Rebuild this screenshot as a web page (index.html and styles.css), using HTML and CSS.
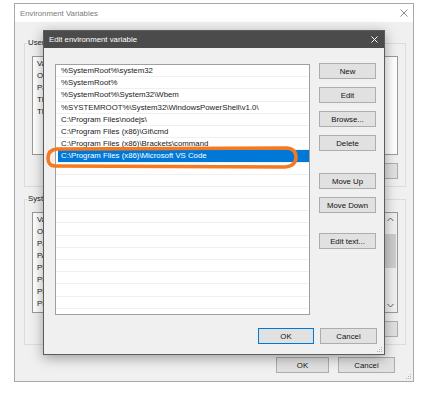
FILE: index.html
```html
<!DOCTYPE html>
<html>
  <head>
    <meta charset="utf-8" />
    <title>Edit environment variable</title>
    <link rel="stylesheet" href="styles.css">
  </head>
  <body>
    <div class="desk">
      <!-- back window -->
      <div class="win env">
        <div class="titlebar">
          <span>Environment Variables</span>
          <svg class="x" width="8" height="8" viewBox="0 0 8 8"><path d="M0.5 0.5 L7.5 7.5 M7.5 0.5 L0.5 7.5" stroke="#8a8a8a" stroke-width="1" /></svg>
        </div>
        <div class="env-body">
          <fieldset class="group">
            <legend>User variables for user</legend>
            <div class="vlist user-list">
              <div class="vrow head">Variable</div>
              <div class="vrow">OneDrive</div>
              <div class="vrow">Path</div>
              <div class="vrow">TEMP</div>
              <div class="vrow">TMP</div>
            </div>
            <div class="btnrow">
              <button class="btn wide">New...</button>
              <button class="btn wide">Edit...</button>
              <button class="btn wide">Delete</button>
            </div>
          </fieldset>
          <fieldset class="group sys">
            <legend>System variables</legend>
            <div class="vlist sys-list">
              <div class="rows">
                <div class="vrow head">Variable</div>
                <div class="vrow">OS</div>
                <div class="vrow">Path</div>
                <div class="vrow">PATHEXT</div>
                <div class="vrow">PROCESSOR_ARCHITECTURE</div>
                <div class="vrow">PROCESSOR_IDENTIFIER</div>
                <div class="vrow">PROCESSOR_LEVEL</div>
                <div class="vrow">PROCESSOR_REVISION</div>
              </div>
              <div class="scroll">
                <div class="arrow"><svg width="7" height="5" viewBox="0 0 7 5"><path d="M0.5 4 L3.5 1 L6.5 4" fill="none" stroke="#606060" /></svg></div>
                <div class="track"><div class="thumb"></div></div>
                <div class="arrow"><svg width="7" height="5" viewBox="0 0 7 5"><path d="M0.5 1 L3.5 4 L6.5 1" fill="none" stroke="#606060" /></svg></div>
              </div>
            </div>
            <div class="btnrow">
              <button class="btn wide">New...</button>
              <button class="btn wide">Edit...</button>
              <button class="btn wide">Delete</button>
            </div>
          </fieldset>
          <div class="env-foot">
            <button class="btn ok-b">OK</button>
            <button class="btn cancel-b">Cancel</button>
          </div>
        </div>
        <svg class="grip" width="7" height="7" viewBox="0 0 7 7"><g fill="#b5b5b5"><rect x="5" y="1" width="1" height="1"/><rect x="3" y="3" width="1" height="1"/><rect x="5" y="3" width="1" height="1"/><rect x="1" y="5" width="1" height="1"/><rect x="3" y="5" width="1" height="1"/><rect x="5" y="5" width="1" height="1"/></g></svg>
      </div>

      <!-- front window -->
      <div class="win edit">
        <div class="titlebar dark">
          <span>Edit environment variable</span>
          <svg class="x" width="7" height="7" viewBox="0 0 7 7"><path d="M0.5 0.5 L6.5 6.5 M6.5 0.5 L0.5 6.5" stroke="#ffffff" stroke-width="1" /></svg>
        </div>
        <div class="edit-body">
          <div class="edit-main">
            <div class="plist">
              <div class="prow">%SystemRoot%\system32</div>
              <div class="prow">%SystemRoot%</div>
              <div class="prow">%SystemRoot%\System32\Wbem</div>
              <div class="prow">%SYSTEMROOT%\System32\WindowsPowerShell\v1.0\</div>
              <div class="prow">C:\Program Files\nodejs\</div>
              <div class="prow">C:\Program Files (x86)\Git\cmd</div>
              <div class="prow">C:\Program Files (x86)\Brackets\command</div>
              <div class="prow sel">C:\Program Files (x86)\Microsoft VS Code</div>
              <div class="prow"></div>
              <div class="prow"></div>
              <div class="prow"></div>
              <div class="prow"></div>
              <div class="prow"></div>
              <div class="prow"></div>
              <div class="prow"></div>
              <div class="prow"></div>
              <div class="prow"></div>
              <div class="prow"></div>
              <div class="prow"></div>
              <div class="prow"></div>
              <div class="prow"></div>
            </div>
            <div class="side">
              <button class="btn">New</button>
              <button class="btn">Edit</button>
              <button class="btn">Browse...</button>
              <button class="btn">Delete</button>
              <button class="btn up">Move Up</button>
              <button class="btn">Move Down</button>
              <button class="btn etext">Edit text...</button>
            </div>
          </div>
          <div class="edit-foot">
            <button class="btn ok-f">OK</button>
            <button class="btn cancel-f">Cancel</button>
          </div>
        </div>
        <svg class="grip" width="7" height="7" viewBox="0 0 7 7"><g fill="#b5b5b5"><rect x="5" y="1" width="1" height="1"/><rect x="3" y="3" width="1" height="1"/><rect x="5" y="3" width="1" height="1"/><rect x="1" y="5" width="1" height="1"/><rect x="3" y="5" width="1" height="1"/><rect x="5" y="5" width="1" height="1"/></g></svg>
      </div>

      <!-- orange hand mark round the selected row -->
      <svg class="mark" width="256" height="26" viewBox="0 0 256 26">
        <path d="M12 3 L242 2 Q251 3 251 11 Q251 20 240 21 L10 20 Q3 20 3 12 Q3 4 12 3 Z" fill="none" stroke="#f47920" stroke-width="3.5" />
      </svg>
    </div>
  </body>
</html>
```

FILE: styles.css
```css
  * {
    box-sizing: border-box;
  }
  body {
    margin: 0;
    background: #ffffff;
    font-family: "Liberation Sans", Arial, sans-serif;
    font-size: 7.8px;
    color: #1a1a1a;
  }
  .desk {
    position: relative;
    width: 425px;
    height: 393px;
    overflow: hidden;
  }
  .win {
    position: absolute;
    display: flex;
    flex-direction: column;
    background: #f0f0f0;
  }
  .titlebar {
    display: flex;
    align-items: center;
    justify-content: space-between;
    flex-shrink: 0;
  }
  .grip {
    position: absolute;
    right: 1px;
    bottom: 1px;
  }
  .btn {
    height: 16px;
    padding: 0;
    margin: 0;
    background: #e1e1e1;
    border: 1px solid #adadad;
    font: inherit;
    color: #111;
  }

  /* back window */
  .env {
    left: 14px;
    top: 3px;
    width: 400px;
    height: 379px;
    border: 1px solid #a8a8a8;
  }
  .env .titlebar {
    height: 18px;
    background: #ffffff;
    color: #7a7a7a;
    padding: 0 5px 0 5px;
  }
  .env-body {
    flex: 1;
    display: flex;
    flex-direction: column;
    padding: 16px 7px 0 9px;
  }
  .group {
    margin: 0;
    min-width: 0;
    border: 1px solid #dcdcdc;
    padding: 8px 7px 7px 7px;
  }
  .group legend {
    padding: 0 1px;
    margin-left: -5px;
    line-height: 10px;
    color: #222;
  }
  .group.sys {
    margin-top: 7px;
  }
  .vlist {
    background: #ffffff;
    border: 1px solid #9a9a9a;
    overflow: hidden;
  }
  .user-list {
    height: 99px;
  }
  .sys-list {
    height: 101px;
    display: flex;
  }
  .sys-list .rows {
    flex: 1;
  }
  .vrow {
    height: 12px;
    line-height: 12px;
    padding-left: 4px;
    white-space: nowrap;
  }
  .vrow.head {
    height: 13px;
    line-height: 13px;
  }
  .scroll {
    width: 13px;
    display: flex;
    flex-direction: column;
    background: #f0f0f0;
  }
  .arrow {
    height: 13px;
    display: flex;
    align-items: center;
    justify-content: center;
  }
  .track {
    flex: 1;
  }
  .thumb {
    margin: 8px 1px 0 1px;
    height: 34px;
    background: #cdcdcd;
  }
  .btnrow {
    display: flex;
    justify-content: flex-end;
    gap: 6px;
    margin-top: 8px;
  }
  .btn.wide {
    width: 60px;
  }
  .env-foot {
    display: flex;
    justify-content: flex-end;
    gap: 9px;
    margin-top: 12px;
    padding-right: 11px;
  }
  .ok-b {
    width: 53px;
  }
  .cancel-b {
    width: 57px;
  }

  /* front window */
  .edit {
    left: 43px;
    top: 30px;
    width: 342px;
    height: 325px;
    border: 1px solid #5c5c5c;
    box-shadow: 0 3px 12px rgba(0, 0, 0, 0.35);
  }
  .titlebar.dark {
    height: 17px;
    background: #4b4b4b;
    color: #ffffff;
    padding: 0 6px 0 5px;
  }
  .edit-body {
    flex: 1;
    display: flex;
    flex-direction: column;
    padding: 16px 7px 0 11px;
  }
  .edit-main {
    display: flex;
    gap: 9px;
  }
  .plist {
    width: 255px;
    height: 251px;
    background: #ffffff;
    border: 1px solid #a0a0a0;
    overflow: hidden;
  }
  .prow {
    height: 12.2px;
    line-height: 11px;
    padding-left: 5px;
    border-bottom: 1px solid #f0f0f0;
    white-space: nowrap;
    color: #1a1a1a;
  }
  .prow.sel {
    margin-left: 2px;
    padding-left: 3px;
    background: #0078d7;
    color: #ffffff;
  }
  .side {
    width: 57px;
    display: flex;
    flex-direction: column;
    gap: 8px;
    margin-top: -1px;
  }
  .side .up {
    margin-top: 14px;
  }
  .side .etext {
    margin-top: 12px;
  }
  .edit-foot {
    display: flex;
    justify-content: flex-end;
    gap: 6px;
    margin-top: 13px;
  }
  .ok-f {
    width: 56px;
    border-color: #0078d7;
  }
  .cancel-f {
    width: 57px;
  }

  .mark {
    position: absolute;
    left: 45px;
    top: 146px;
  }
```
